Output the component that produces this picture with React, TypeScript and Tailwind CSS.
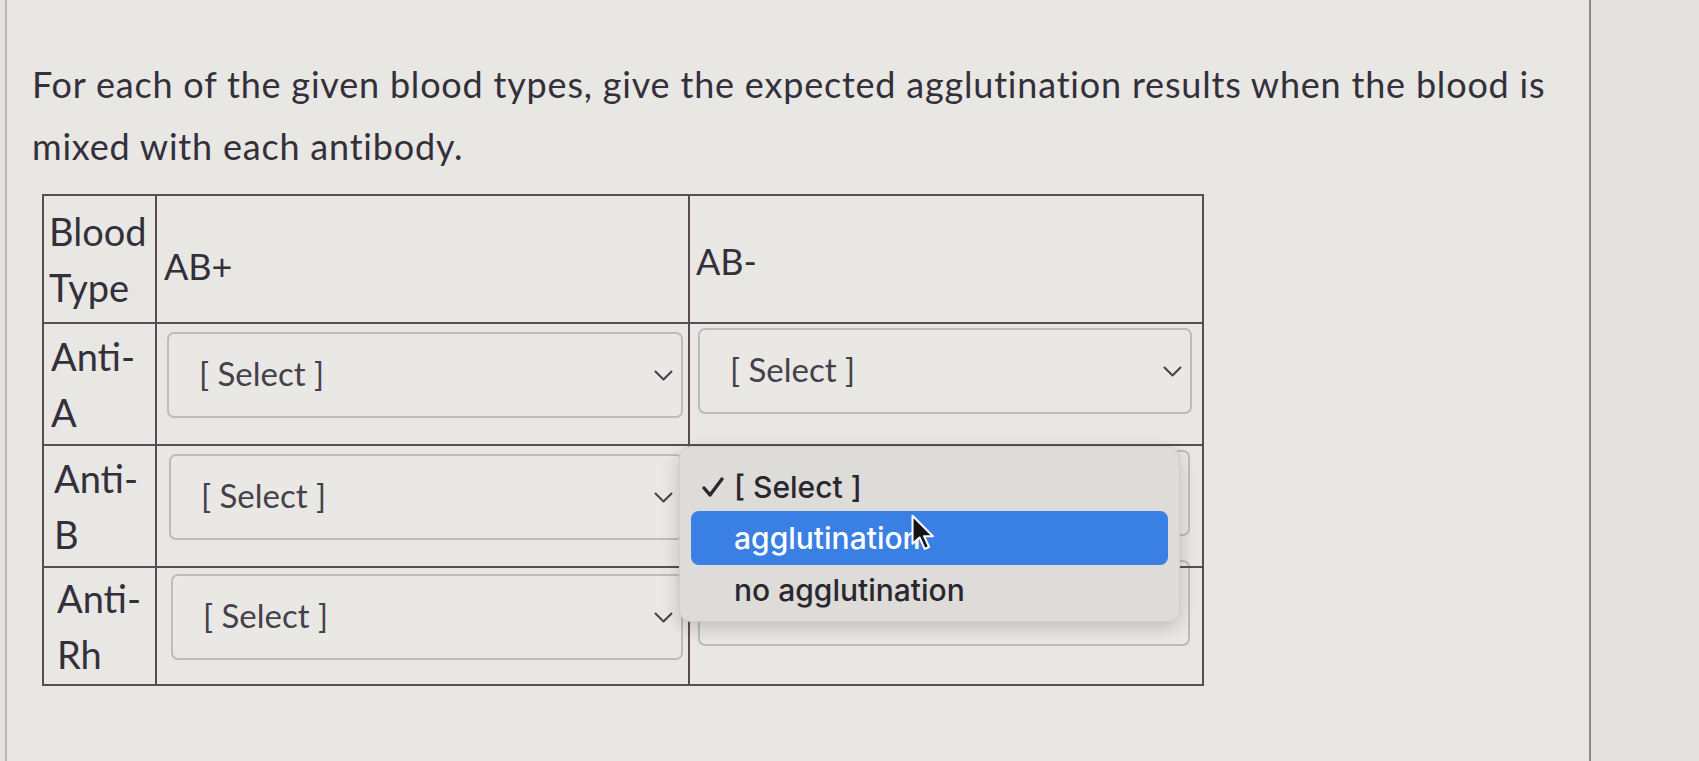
import React from "react";

const Chevron = () => (
  <svg width="19" height="11" viewBox="0 0 19 11" className="shrink-0">
    <polyline points="1.5,1.5 9.5,9.5 17.5,1.5" fill="none" stroke="#45414b" strokeWidth="2" strokeLinecap="round" strokeLinejoin="round" />
  </svg>
);

const SelectBox = ({ extra = "" }: { extra?: string }) => (
  <div className={`w-full h-[86px] rounded-[7px] border-2 border-[#bebcb9] bg-[#e9e8e4] flex items-center justify-between pl-[30px] pr-[8px] ${extra}`}>
    <span className="text-[33px] text-[#45414b] leading-none pb-[4px]">[ Select ]</span>
    <Chevron />
  </div>
);

const B = "border-2 border-[#5b4b55]";

export default function App() {
  return (
    <div
      className="w-[1699px] h-[761px] bg-[#e3e2de] overflow-hidden flex"
      style={{ fontFamily: "Lato, 'Open Sans', sans-serif" }}
    >
      <div className="ml-[5px] w-[1586px] h-full shrink-0 border-l-2 border-r-2 border-l-[#b7b6b4] border-r-[#8c8b93] bg-[#e8e7e3] pl-[25px]">
        <div className="pt-[53px] text-[36px] leading-[62px] tracking-[0.8px] text-[#34303b] whitespace-nowrap">
          <div>For each of the given blood types, give the expected agglutination results when the blood is</div>
          <div>mixed with each antibody.</div>
        </div>

        <div className="relative mt-[17px] ml-[10px] w-[1162px]">
          <table className={`border-collapse ${B} text-[#34303b]`}>
            <tbody>
              <tr className="h-[128px]">
                <td className={`w-[113px] ${B} pl-[5px] pr-0 align-middle text-[38px] leading-[56px]`}>
                  <div>Blood</div>
                  <div>Type</div>
                </td>
                <td className={`w-[534px] ${B} px-[7px] pt-[14px] align-middle text-[36px]`}>AB+</td>
                <td className={`w-[515px] ${B} px-[6px] pt-[4px] align-middle text-[36px]`}>AB-</td>
              </tr>
              <tr className="h-[122px]">
                <td className={`${B} pl-[7px] pr-0 align-middle text-[38px] leading-[56px]`}>
                  <div>Anti-</div>
                  <div>A</div>
                </td>
                <td className={`${B} pl-[10px] pr-[5px] pt-[8px] align-top`}>
                  <SelectBox />
                </td>
                <td className={`${B} pl-[8px] pr-[10px] pt-[4px] align-top`}>
                  <SelectBox />
                </td>
              </tr>
              <tr className="h-[122px]">
                <td className={`${B} pl-[10px] pr-0 align-middle text-[38px] leading-[56px]`}>
                  <div>Anti-</div>
                  <div>B</div>
                </td>
                <td className={`${B} pl-[12px] pr-[5px] pt-[8px] align-top`}>
                  <SelectBox />
                </td>
                <td className={`${B} pl-[8px] pr-[12px] pt-[4px] align-top`}>
                  <SelectBox />
                </td>
              </tr>
              <tr className="h-[118px]">
                <td className={`${B} pl-[13px] pr-0 align-middle text-[38px] leading-[56px]`}>
                  <div>Anti-</div>
                  <div>Rh</div>
                </td>
                <td className={`${B} pl-[14px] pr-[5px] pt-[6px] align-top`}>
                  <SelectBox />
                </td>
                <td className={`${B} pl-[8px] pr-[12px] pt-0 align-top`}>
                  <SelectBox extra="-mt-[8px]" />
                </td>
              </tr>
            </tbody>
          </table>

          <div
            className="absolute left-[637px] top-[252px] w-[501px] h-[176px] rounded-[12px] bg-[#dddcd8] border border-[#cfcecb] shadow-[0_6px_18px_rgba(0,0,0,0.18)] pt-[16px] px-[11px]"
            style={{ fontFamily: "Inter, 'Open Sans', sans-serif" }}
          >
            <div className="h-[48px] flex items-center text-[30px] font-medium text-[#2b2730]">
              <svg width="24" height="22" viewBox="0 0 24 22" className="ml-[10px] mr-[9px]">
                <polyline points="3,12 9,19 21,3" fill="none" stroke="#2b2730" strokeWidth="3.4" strokeLinecap="round" strokeLinejoin="round" />
              </svg>
              <span>[ Select ]</span>
            </div>
            <div className="relative h-[54px] rounded-[8px] bg-[#3a80e4] flex items-center pl-[43px] text-[30px] font-medium text-white">
              agglutination
              <svg width="28" height="40" viewBox="0 0 22 31" className="absolute left-[219px] top-[2px]">
                <path d="M2,2 L2,24 L7.5,19 L11.5,28 L15,26.5 L11,18 L18,18 Z" fill="#141414" stroke="#fff" strokeWidth="1.6" strokeLinejoin="round" />
              </svg>
            </div>
            <div className="h-[50px] flex items-center pl-[43px] text-[30px] font-medium text-[#2b2730]">
              no agglutination
            </div>
          </div>
        </div>
      </div>
    </div>
  );
}
